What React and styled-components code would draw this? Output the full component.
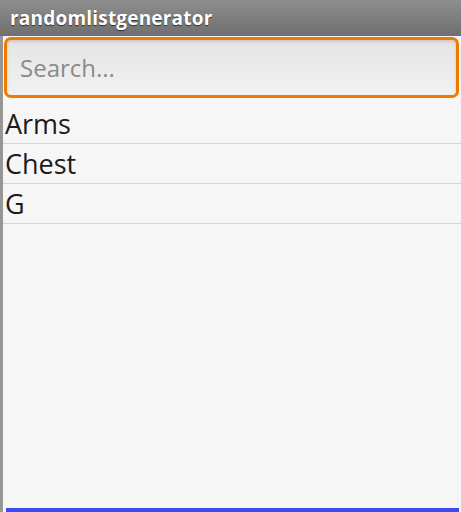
import React from "react";
import styled, { createGlobalStyle } from "styled-components";

const GlobalStyle = createGlobalStyle`
  html, body {
    margin: 0;
    padding: 0;
    background: #f6f6f6;
  }
  #root {
    width: 461px;
    height: 512px;
  }
`;

const Screen = styled.div`
  width: 461px;
  height: 512px;
  display: flex;
  flex-direction: column;
  overflow: hidden;
  font-family: "Open Sans", "DejaVu Sans", sans-serif;
  background: #f6f6f6;
`;

const TitleBar = styled.div`
  height: 36px;
  flex-shrink: 0;
  display: flex;
  align-items: center;
  padding-left: 10px;
  background: linear-gradient(#8e8e8e, #6f6f6f);
  color: #ffffff;
  font-size: 19px;
  font-weight: 700;
  text-shadow: 0 1px 1px rgba(0, 0, 0, 0.6);
  letter-spacing: 0.2px;
`;

const Body = styled.div`
  flex: 1;
  display: flex;
`;

const EdgeStrip = styled.div`
  width: 3px;
  flex-shrink: 0;
  background: #969696;
`;

const Content = styled.div`
  flex: 1;
  display: flex;
  flex-direction: column;
`;

const SearchBox = styled.div`
  margin: 1px 2px 0 1px;
  height: 55px;
  border: 3px solid #f07a00;
  border-radius: 7px;
  background: linear-gradient(#e4e4e4, #f2f2f2);
  box-shadow: inset 0 2px 3px rgba(0, 0, 0, 0.12);
  display: flex;
  align-items: center;
  padding-left: 13px;
  font-size: 24px;
  color: #8a8a8a;
`;

const List = styled.div`
  margin-top: 6px;
  display: flex;
  flex-direction: column;
`;

const Row = styled.div`
  height: 39px;
  border-bottom: 1px solid #d6d6d6;
  display: flex;
  align-items: center;
  padding-left: 2px;
  font-size: 27px;
  color: #1c1c1c;
`;

const Filler = styled.div`
  flex: 1;
`;

const BottomBar = styled.div`
  height: 4px;
  margin: 0 2px 0 3px;
  background: #3d4af2;
`;

const items = ["Arms", "Chest", "G"];

export default function App() {
  return (
    <Screen>
      <GlobalStyle />
      <TitleBar>randomlistgenerator</TitleBar>
      <Body>
        <EdgeStrip />
        <Content>
          <SearchBox>Search...</SearchBox>
          <List>
            {items.map((item) => (
              <Row key={item}>{item}</Row>
            ))}
          </List>
          <Filler />
          <BottomBar />
        </Content>
      </Body>
    </Screen>
  );
}
